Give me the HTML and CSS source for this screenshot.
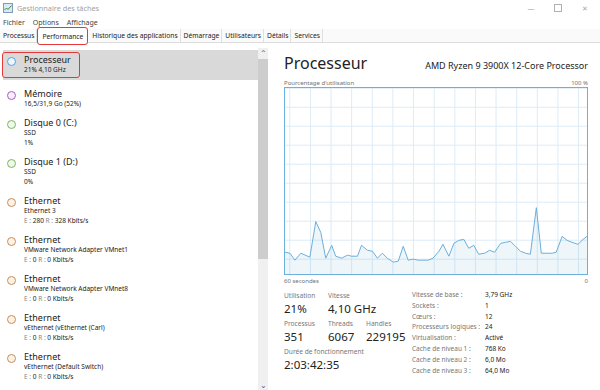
FILE: index.html
```html
<!DOCTYPE html>
<html lang="fr">
<head>
    <meta charset="UTF-8">
    <title>Gestionnaire des tâches</title>
    <link rel="stylesheet" href="styles.css">
</head>
<body>
    <div class="window">
        <header class="titlebar">
            <svg class="app-icon" width="10" height="10" viewBox="0 0 10 10">
                <rect x="0.5" y="0.5" width="9" height="9" fill="#dbe9f4" stroke="#7a9cb8"/>
                <polyline points="1.5,7 3.5,5 5,6.5 8.5,2.5" fill="none" stroke="#3c8a3c" stroke-width="1"/>
            </svg>
            <span class="title">Gestionnaire des tâches</span>
            <div class="controls">
                <span class="ctrl">&#8212;</span>
                <span class="ctrl box"></span>
                <span class="ctrl">&#10005;</span>
            </div>
        </header>

        <nav class="menubar">
            <span>Fichier</span>
            <span>Options</span>
            <span>Affichage</span>
        </nav>

        <div class="tabs">
            <span class="tab">Processus</span>
            <span class="tab active">Performance</span>
            <span class="tab">Historique des applications</span>
            <span class="tab">Démarrage</span>
            <span class="tab">Utilisateurs</span>
            <span class="tab">Détails</span>
            <span class="tab">Services</span>
        </div>

        <main class="content">
            <aside class="sidebar">
                <ul class="devices">
                    <li class="device selected">
                        <div class="marked">
                            <span class="dot cpu"></span>
                            <div class="info">
                                <div class="name">Processeur</div>
                                <div class="sub">21% 4,10 GHz</div>
                            </div>
                        </div>
                    </li>
                    <li class="device">
                        <span class="dot mem"></span>
                        <div class="info">
                            <div class="name">Mémoire</div>
                            <div class="sub">16,5/31,9 Go (52%)</div>
                        </div>
                    </li>
                    <li class="device">
                        <span class="dot disk"></span>
                        <div class="info">
                            <div class="name">Disque 0 (C:)</div>
                            <div class="sub">SSD</div>
                            <div class="sub">1%</div>
                        </div>
                    </li>
                    <li class="device">
                        <span class="dot disk"></span>
                        <div class="info">
                            <div class="name">Disque 1 (D:)</div>
                            <div class="sub">SSD</div>
                            <div class="sub">0%</div>
                        </div>
                    </li>
                    <li class="device">
                        <span class="dot net"></span>
                        <div class="info">
                            <div class="name">Ethernet</div>
                            <div class="sub">Ethernet 3</div>
                            <div class="sub"><span class="key">E :</span> 280 <span class="key">R :</span> 328 Kbits/s</div>
                        </div>
                    </li>
                    <li class="device">
                        <span class="dot net"></span>
                        <div class="info">
                            <div class="name">Ethernet</div>
                            <div class="sub">VMware Network Adapter VMnet1</div>
                            <div class="sub"><span class="key">E :</span> 0 <span class="key">R :</span> 0 Kbits/s</div>
                        </div>
                    </li>
                    <li class="device">
                        <span class="dot net"></span>
                        <div class="info">
                            <div class="name">Ethernet</div>
                            <div class="sub">VMware Network Adapter VMnet8</div>
                            <div class="sub"><span class="key">E :</span> 0 <span class="key">R :</span> 0 Kbits/s</div>
                        </div>
                    </li>
                    <li class="device">
                        <span class="dot net"></span>
                        <div class="info">
                            <div class="name">Ethernet</div>
                            <div class="sub">vEthernet (vEthernet (Carl)</div>
                            <div class="sub"><span class="key">E :</span> 0 <span class="key">R :</span> 0 Kbits/s</div>
                        </div>
                    </li>
                    <li class="device">
                        <span class="dot net"></span>
                        <div class="info">
                            <div class="name">Ethernet</div>
                            <div class="sub">vEthernet (Default Switch)</div>
                            <div class="sub"><span class="key">E :</span> 0 <span class="key">R :</span> 0 Kbits/s</div>
                        </div>
                    </li>
                </ul>
                <div class="scrollbar">
                    <span class="arrow">&#8963;</span>
                    <div class="track"><div class="thumb"></div></div>
                    <span class="arrow">&#8964;</span>
                </div>
            </aside>

            <section class="detail">
                <div class="detail-head">
                    <h1>Processeur</h1>
                    <span class="model">AMD Ryzen 9 3900X 12-Core Processor</span>
                </div>
                <div class="axis">
                    <span>Pourcentage d'utilisation</span>
                    <span>100 %</span>
                </div>
                <div class="graph">
                    <svg viewBox="0 0 304 188" preserveAspectRatio="none">
                        <polygon class="area" points="0,166 5,167 10,174 16,167 25,171 31,135 36,146 41,172 47,159 51,170 57,172 63,169 67,170 73,170 77,159 83,164 88,165 93,172 98,167 103,172 109,176 114,175 119,160 124,174 129,173 134,174 139,174 144,174 149,172 155,165 159,158 165,170 170,157 175,154 180,153 185,162 190,159 195,168 201,167 206,164 211,166 217,157 222,156 227,155 232,160 237,165 242,167 247,168 253,121 258,167 263,167 269,167 273,166 279,150 284,154 289,156 295,158 300,153 304,150 304,188 0,188"/>
                        <polyline class="line" points="0,166 5,167 10,174 16,167 25,171 31,135 36,146 41,172 47,159 51,170 57,172 63,169 67,170 73,170 77,159 83,164 88,165 93,172 98,167 103,172 109,176 114,175 119,160 124,174 129,173 134,174 139,174 144,174 149,172 155,165 159,158 165,170 170,157 175,154 180,153 185,162 190,159 195,168 201,167 206,164 211,166 217,157 222,156 227,155 232,160 237,165 242,167 247,168 253,121 258,167 263,167 269,167 273,166 279,150 284,154 289,156 295,158 300,153 304,150"/>
                    </svg>
                </div>
                <div class="axis bottom">
                    <span>60 secondes</span>
                    <span>0</span>
                </div>

                <div class="stats">
                    <div class="live">
                        <div class="row">
                            <div class="stat">
                                <div class="label">Utilisation</div>
                                <div class="value">21%</div>
                            </div>
                            <div class="stat">
                                <div class="label">Vitesse</div>
                                <div class="value">4,10 GHz</div>
                            </div>
                        </div>
                        <div class="row">
                            <div class="stat">
                                <div class="label">Processus</div>
                                <div class="value">351</div>
                            </div>
                            <div class="stat">
                                <div class="label">Threads</div>
                                <div class="value">6067</div>
                            </div>
                            <div class="stat">
                                <div class="label">Handles</div>
                                <div class="value">229195</div>
                            </div>
                        </div>
                        <div class="row">
                            <div class="stat">
                                <div class="label">Durée de fonctionnement</div>
                                <div class="value">2:03:42:35</div>
                            </div>
                        </div>
                    </div>
                    <dl class="specs">
                        <dt>Vitesse de base :</dt><dd>3,79 GHz</dd>
                        <dt>Sockets :</dt><dd>1</dd>
                        <dt>Cœurs :</dt><dd>12</dd>
                        <dt>Processeurs logiques :</dt><dd>24</dd>
                        <dt>Virtualisation :</dt><dd>Activé</dd>
                        <dt>Cache de niveau 1 :</dt><dd>768 Ko</dd>
                        <dt>Cache de niveau 2 :</dt><dd>6,0 Mo</dd>
                        <dt>Cache de niveau 3 :</dt><dd>64,0 Mo</dd>
                    </dl>
                </div>
            </section>
        </main>
    </div>
</body>
</html>
```

FILE: styles.css
```css
/* General */
body {
    margin: 0;
    font-family: "Noto Sans", "Open Sans", sans-serif;
    color: #222;
    background: #fff;
}

.window {
    width: 600px;
    height: 390px;
    overflow: hidden;
    display: flex;
    flex-direction: column;
}

/* Title bar */
.titlebar {
    height: 16px;
    display: flex;
    align-items: center;
    padding-left: 3px;
}

.app-icon {
    margin-right: 4px;
}

.title {
    font-size: 7.3px;
    color: #a0a0a0;
}

.controls {
    margin-left: auto;
    display: flex;
    align-items: center;
    padding-right: 2px;
}

.ctrl {
    width: 26px;
    text-align: center;
    font-size: 7px;
    color: #a8a8a8;
}

.ctrl.box {
    width: 6px;
    height: 6px;
    border: 1px solid #b0b0b0;
    margin: 0 10px;
}

/* Menu */
.menubar {
    height: 13px;
    display: flex;
    align-items: center;
    gap: 8px;
    padding-left: 3px;
    font-size: 7px;
    color: #444;
}

/* Tabs */
.tabs {
    height: 13px;
    display: flex;
    align-items: stretch;
    border-bottom: 1px solid #dcdcdc;
    background: #fafafa;
}

.tab {
    display: flex;
    align-items: center;
    padding: 0 2px 0 3px;
    font-size: 6.7px;
    white-space: nowrap;
    color: #222;
    border-right: 1px solid #e0e0e0;
}

.tab.active {
    background: #fff;
    margin: -2px 1px -3px 0;
    padding: 0 4px;
    border: 1.5px solid #e3393c;
    border-radius: 3px;
}

/* Content */
.content {
    flex: 1;
    display: flex;
    min-height: 0;
}

.sidebar {
    width: 268px;
    display: flex;
    padding-top: 7px;
}

.devices {
    list-style: none;
    margin: 0;
    padding: 0;
    flex: 1;
}

.device {
    display: flex;
    align-items: flex-start;
    margin-left: 3px;
    padding: 3px 0 6px 4px;
}

.device.selected {
    background: #d9d9d9;
    padding: 2px 0 2px 0;
    margin-bottom: 5px;
}

.marked {
    display: flex;
    align-items: flex-start;
    padding: 1px 8px 2px 4px;
    border: 1.5px solid #e3393c;
    border-radius: 3px;
    margin-left: -1px;
}

.dot {
    width: 7px;
    height: 7px;
    border-radius: 50%;
    margin: 3px 8px 0 0;
    border: 1.2px solid;
    flex: none;
}

.dot.cpu { border-color: #5aa0d4; background: #eef5fb; }
.dot.mem { border-color: #a95ec4; background: #f6eefa; }
.dot.disk { border-color: #7cb85e; background: #f0f8ec; }
.dot.net { border-color: #c98e55; background: #fbf3ea; }

.name {
    font-size: 9px;
    line-height: 11px;
    color: #222;
}

.sub {
    font-size: 6.5px;
    line-height: 9.5px;
    white-space: nowrap;
    color: #222;
}

.sub .key {
    color: #888;
}

.scrollbar {
    width: 10px;
    display: flex;
    flex-direction: column;
    background: #f0f0f0;
    margin-top: -2px;
}

.arrow {
    height: 10px;
    font-size: 8px;
    line-height: 10px;
    text-align: center;
    color: #606060;
}

.track {
    flex: 1;
}

.thumb {
    height: 200px;
    margin-top: 1px;
    background: #cdcdcd;
}

/* Detail panel */
.detail {
    flex: 1;
    padding: 9px 12px 0 16px;
}

.detail-head {
    display: flex;
    justify-content: space-between;
    align-items: baseline;
}

.detail-head h1 {
    margin: 0;
    font-size: 16px;
    font-weight: 400;
    line-height: 22px;
}

.model {
    font-size: 9px;
}

.axis {
    display: flex;
    justify-content: space-between;
    font-size: 6px;
    line-height: 8px;
    color: #707070;
    margin-top: 5px;
}

.axis.bottom {
    margin-top: 2px;
}

.graph {
    height: 188px;
    box-sizing: border-box;
    border: 1px solid #6db0de;
    background-color: #fff;
    background-image:
        linear-gradient(to right, #dcebf6 1px, transparent 1px),
        linear-gradient(to bottom, #dcebf6 1px, transparent 1px);
    background-size: 20.64px 19px;
    background-position: 4.3px -0.3px;
}

.graph svg {
    display: block;
    width: 100%;
    height: 100%;
}

.area {
    fill: rgba(17, 125, 187, 0.07);
}

.line {
    fill: none;
    stroke: #6aaedb;
    stroke-width: 1;
}

/* Stats */
.stats {
    display: flex;
    margin-top: 6px;
}

.live {
    width: 128px;
}

.row {
    display: flex;
    margin-bottom: 2px;
    white-space: nowrap;
}

.stat .label {
    font-size: 6.6px;
    line-height: 9px;
    color: #777;
}

.stat .value {
    font-size: 11.5px;
    line-height: 17px;
    color: #222;
}

.row .stat:nth-child(1) { width: 44px; }
.row .stat:nth-child(2) { width: 38px; }

.specs {
    margin: -1px 0 0;
    display: grid;
    grid-template-columns: 73px auto;
    font-size: 6.5px;
    line-height: 10.8px;
    white-space: nowrap;
}

.specs dt {
    color: #777;
}

.specs dd {
    margin: 0;
    color: #222;
}
```
